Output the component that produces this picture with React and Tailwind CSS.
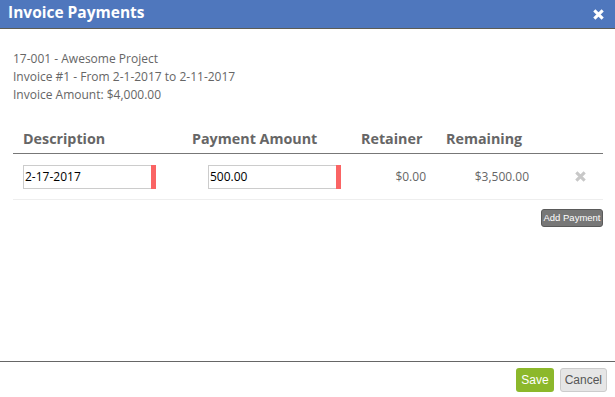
import React from 'react';

const XIcon = ({ className }) => (
    <svg viewBox="0 0 10 10" className={className} fill="none" stroke="currentColor" strokeWidth="2.8" strokeLinecap="butt">
        <path d="M1.2 1.2 L8.8 8.8 M8.8 1.2 L1.2 8.8" />
    </svg>
);

const ReqInput = ({ value, className }) => (
    <div className={"relative h-[24px] w-[133px] border border-[#cccccc] bg-white " + className}>
        <input
            type="text"
            defaultValue={value}
            className="h-full w-full pl-[1px] pr-[8px] text-[12px] text-black outline-none bg-transparent"
        />
        <div className="absolute right-[-1px] top-[-1px] bottom-[-1px] w-[5px] bg-[#fa6464]" />
    </div>
);

const App = () => {
    return (
        <div className="flex h-[397px] w-[615px] flex-col bg-white font-['Open_Sans',sans-serif] text-[#666]">
            <div className="flex h-[29px] shrink-0 items-center justify-between border-b border-[#5c5c55] bg-[#4f77bd] pl-[8px] pr-[11px]">
                <h2 className="text-[15.5px] font-bold text-white leading-none pb-[2px]">Invoice Payments</h2>
                <XIcon className="h-[11px] w-[11px] text-white" />
            </div>

            <div className="flex-1 px-[13px] pt-[21px]">
                <div className="text-[12px] leading-[18px] text-[#666]">
                    <p>17-001 - Awesome Project</p>
                    <p>Invoice #1 - From 2-1-2017 to 2-11-2017</p>
                    <p>Invoice Amount: $4,000.00</p>
                </div>

                <div className="mt-[21px] w-[590px]">
                    <div className="grid h-[29px] grid-cols-[169px_169px_85px_103px_1fr] items-center border-b border-[#777] text-[14.3px] font-bold text-[#666]">
                        <div className="pl-[10px]">Description</div>
                        <div className="pl-[10px]">Payment Amount</div>
                        <div className="pl-[10px]">Retainer</div>
                        <div className="pl-[10px]">Remaining</div>
                        <div />
                    </div>
                    <div className="grid h-[46px] grid-cols-[169px_169px_85px_103px_1fr] items-center border-b border-[#eeeeee] text-[12px] text-[#666]">
                        <div className="pl-[10px]"><ReqInput value="2-17-2017" /></div>
                        <div className="pl-[26px]"><ReqInput value="500.00" /></div>
                        <div className="pr-[10px] text-right">$0.00</div>
                        <div className="pr-[10px] text-right">$3,500.00</div>
                        <div className="flex justify-end pr-[17px]">
                            <XIcon className="h-[11px] w-[11px] text-[#c8c8c8]" />
                        </div>
                    </div>
                    <div className="mt-[9px] flex justify-end">
                        <button className="h-[18px] w-[62px] rounded-[3px] border border-[#5a5a5a] bg-[#777] font-['Liberation_Sans',sans-serif] text-[9.5px] leading-none text-white">
                            Add Payment
                        </button>
                    </div>
                </div>
            </div>

            <div className="flex h-[36px] shrink-0 items-start justify-end gap-[6px] border-t border-[#666] pr-[8px] pt-[6px] font-['Liberation_Sans',sans-serif] text-[12px]">
                <button className="h-[24px] rounded-[3px] bg-[#8cb82b] px-[5px] text-white">Save</button>
                <button className="h-[24px] rounded-[3px] border border-[#cccccc] bg-[#e6e6e6] px-[4px] text-[#555]">Cancel</button>
            </div>
        </div>
    );
};

export default App;
